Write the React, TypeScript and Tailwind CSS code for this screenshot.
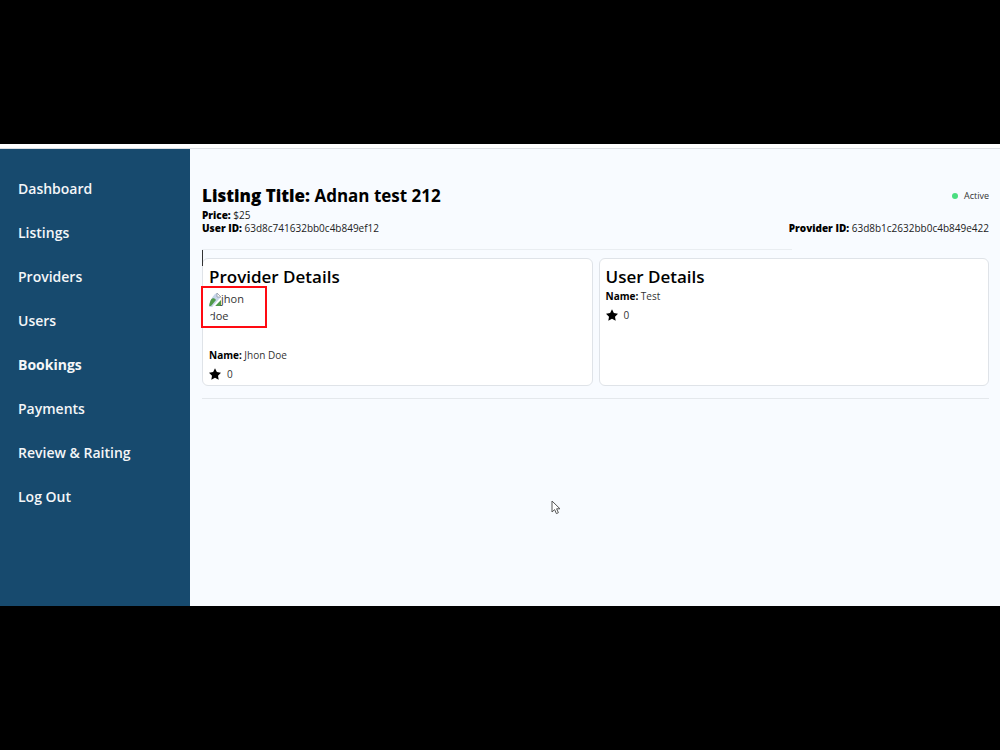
import type { ReactNode } from "react";

const NAV_ITEMS = ["Dashboard", "Listings", "Providers", "Users", "Bookings", "Payments", "Review & Raiting", "Log Out"];
const ACTIVE_ITEM = "Bookings";

function Star() {
  return (
    <svg viewBox="0 0 24 24" className="size-3 shrink-0" aria-hidden="true">
      <path d="M12 .6l3.700 7.600 8.300 1.200-6 5.900 1.400 8.300L12 19.700l-7.400 3.900L6 15.300 0 9.400l8.300-1.200z" />
    </svg>
  );
}

// what the browser shows while the provider has no photo
function BrokenPhoto({ alt }: { alt: string }) {
  return (
    <div role="img" aria-label={alt} className="h-[38px] w-10 overflow-hidden rounded-full pt-px text-[11px] leading-[17px] text-[#333]">
      <svg viewBox="0 0 12 14" className="inline h-3.5 w-3 align-middle">
        <path d="M0 0h8l4 4v1L4 14H0z" fill="#c6d5ea" />
        <path d="M8 0v4h4z" fill="#fff" stroke="#8f99a6" strokeWidth=".8" />
        <path d="M0 9c2-4 5-5 7-2l-5 6H0z" fill="#4f9a4a" />
        <path d="M12 7v6H6z" fill="#4f9a4a" />
        <path d="M12 5l-8 9" stroke="#fff" strokeWidth="1.500" />
      </svg>
      {alt}
    </div>
  );
}

function DetailCard({ title, name, rating, children }: { title: string; name: string; rating: number; children?: ReactNode }) {
  return (
    <section className="min-h-32 flex-1 rounded-md border border-[#dfe3e8] bg-white px-1.5 pt-1.5 pb-1">
      <h2 className="text-[17px] leading-6 font-semibold">{title}</h2>
      {children}
      <p className="leading-[14px] text-[#333]"><b className="text-black">Name:</b> {name}</p>
      <div className="mt-1.5 flex items-center gap-1.5 leading-3 text-[#333]">
        <Star />
        <span>{rating}</span>
      </div>
    </section>
  );
}

export default function App() {
  return (
    <div className="flex min-h-screen flex-col justify-center bg-black font-['Open_Sans','Noto_Sans',sans-serif] text-[10px] text-black">
      <div className="h-[5px] border-b border-[#dcdfe4] bg-white" />
      <div className="flex min-h-[457px]">
        <aside className="w-[19%] shrink-0 bg-[#174a6e] pt-[18px]">
          <nav className="flex flex-col">
            {NAV_ITEMS.map((item) => (
              <a key={item} href="#" className={`pl-[18px] text-sm leading-[44px] text-[#f4f6f8] ${item === ACTIVE_ITEM ? "font-bold" : "font-semibold"}`}>
                {item}
              </a>
            ))}
          </nav>
        </aside>

        <main className="relative min-w-0 flex-1 bg-[#f8fbff] pt-[35px] pr-[11px] pl-3">
          <div className="flex items-center justify-between">
            <h1 className="text-[17px] leading-6 font-bold"><span className="font-extrabold">Listing Title:</span> Adnan test 212</h1>
            <span className="flex items-center gap-1.5 text-[9px] text-[#333]">
              <span className="size-1.5 rounded-full bg-[#4ade80]" />
              Active
            </span>
          </div>
          <p className="mt-px leading-[13px] text-[#222]"><b className="font-extrabold text-black">Price:</b> $25</p>
          <div className="flex justify-between leading-[13px] text-[#222]">
            <p><b className="font-extrabold text-black">User ID:</b> 63d8c741632bb0c4b849ef12</p>
            <p><b className="font-extrabold text-black">Provider ID:</b> 63d8b1c2632bb0c4b849e422</p>
          </div>

          <hr className="mt-3.5 w-3/4 border-[#e9edf1]" />

          <div className="relative mt-2 flex gap-1.5">
            {/* text caret */}
            <span className="absolute -top-2 left-0 h-4 w-px bg-[#333]" />
            <DetailCard title="Provider Details" name="Jhon Doe" rating={0}>
              <div className="relative mb-3 h-[47px]">
                <BrokenPhoto alt="jhon doe" />
                <span className="absolute -top-[3px] -left-2 h-[42px] w-[66px] border-2 border-[#ff0a12]" />
              </div>
            </DetailCard>
            <DetailCard title="User Details" name="Test" rating={0} />
          </div>

          <hr className="mt-3 border-[#e4e8ec]" />

          {/* mouse pointer */}
          <svg viewBox="0 0 10 15" className="absolute top-[351px] left-[361px] h-[15px] w-2.5" aria-hidden="true">
            <path d="M1 1v11l2.600-2.400 1.800 4 2-.9-1.800-3.900H9z" fill="#fff" stroke="#555" />
          </svg>
        </main>
      </div>
    </div>
  );
}
